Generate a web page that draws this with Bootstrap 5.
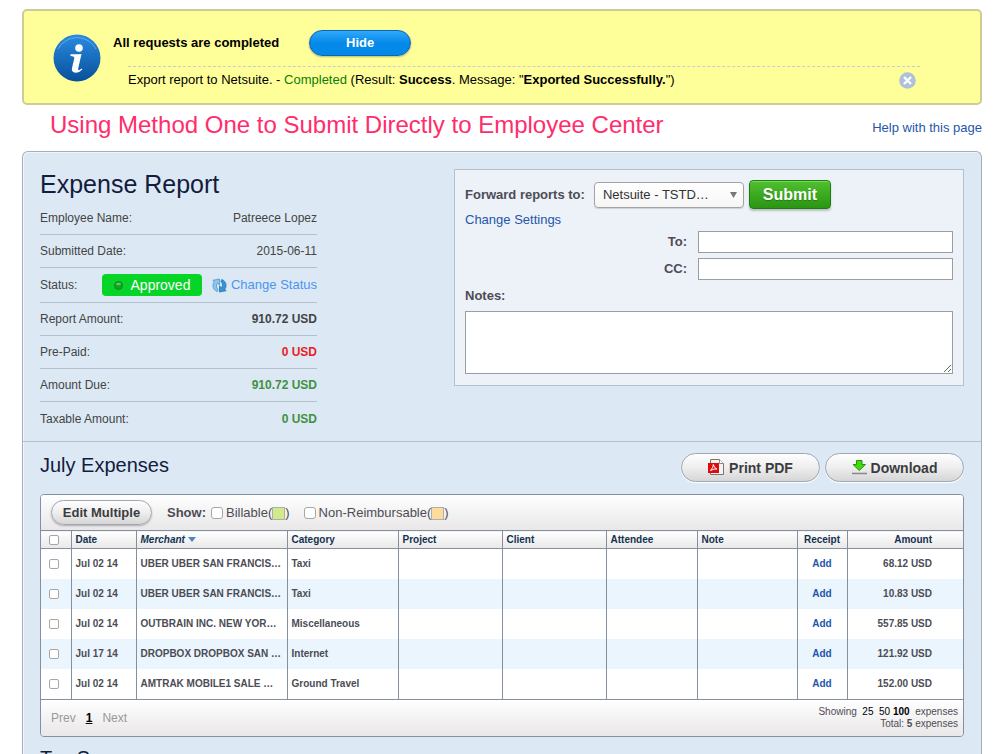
<!DOCTYPE html>
<html lang="en">
<head>
<meta charset="utf-8">
<meta name="viewport" content="width=device-width, initial-scale=1">
<title>Expense Report</title>
<link href="https://cdn.jsdelivr.net/npm/bootstrap@5.3.0/dist/css/bootstrap.min.css" rel="stylesheet">
<style>
body{font-family:"Liberation Sans",Arial,sans-serif;font-size:13px;line-height:18px;color:#444;background:#fff}
a{color:#1f56ab;text-decoration:none}
a:hover{text-decoration:underline}
.page{height:100vh;overflow:auto;scrollbar-width:none;padding:9px 18px 0 22px}
.page::-webkit-scrollbar{display:none}
.notice{background:#ff9;border:2px solid #cc9;border-radius:5px;color:#000;padding:19px 60px 14px 29px}
.notice-icon{margin-top:4px}
.btn-hide{width:102px;height:26px;margin-left:30px;padding:0;border:1px solid #0a66b8;border-radius:13px;background:linear-gradient(#31a8fb,#0489e8 50%,#0489e8);color:#fff;font-size:13px;line-height:18px;font-weight:bold;box-shadow:0 1px 2px #0004}
.btn-hide:hover{background:#0489e8;color:#fff}
.jobs{margin:10px 0 0 15px;border-top:1px dashed #cbcbd8;padding-top:4px}
.job-ok{color:#087d08}
.headline{font-size:24px;line-height:30px;color:#ff2d6c;font-weight:normal}
.headbar{height:46px;padding:5px 0 0 28px}
.help{padding-top:9px}
.panel{background:#dce9f4;border:1px solid #a6afb9;border-bottom:0;border-radius:6px 6px 0 0;box-shadow:inset 1px 1px #f0f6fb}
.sec{padding:17px}
.sec-top{border-bottom:1px solid #b3bfcc;padding-bottom:6px}
h1,h2{color:#131b3e;font-weight:normal;margin:0}
h1{font-size:25px;line-height:31px;margin-bottom:2px}
h2{font-size:20px;line-height:24px}
.facts{width:277px}
.facts dl{margin:0;font-size:12px}
.fact{min-height:33px;border-bottom:1px solid #b3bfcc}
.fact:last-child{border:0}
.facts dt{font-weight:normal}
.facts dd{margin:0}
.due{color:#42903f}
.paid{color:#eb1c24}
.status-row{min-height:35px}
.state{width:100px;height:22px;border-radius:4px;background:#06d427;color:#fff;font-size:14px}
.sync{margin:0 4px 0 10px}
.change{color:#4a95f2;font-size:13px}
.fwd{width:510px;height:217px;background:#edf1f8;border:1px solid #b4c0cc;padding:10px}
.fwd label{font-weight:bold;color:#4c4c55}
.pick{width:150px;height:26px;margin:0 5px 0 9px;border:1px solid #a3a3a3;border-radius:4px;padding:0 24px 0 8px;color:#333;appearance:none;background:url("data:image/svg+xml,%3Csvg xmlns='http://www.w3.org/2000/svg' width='8' height='6'%3E%3Cpath d='M0 0h7L3.5 6z' fill='%23777'/%3E%3C/svg%3E") no-repeat right 5px center,linear-gradient(#fff,#f6f6f6);box-shadow:0 1px 1px #0002}
.btn-send{width:82px;height:29px;padding:0;border:1px solid #1e7c12;border-radius:4px;background:linear-gradient(#4fc02f,#2a9512);color:#fff;font-weight:bold;font-size:16px;line-height:20px;box-shadow:0 2px 2px #0003,inset 0 1px #74d85a;text-shadow:0 1px 1px #0004}
.btn-send:hover{background:#2a9512;color:#fff}
.settings{display:inline-block;margin-top:2px}
.mail{height:22px;margin-top:5px}
.mail:first-of-type{margin-top:2px}
.mail label{margin-right:11px}
.noteslabel{margin:7px 0 6px}
.field,.notes{border:1px solid #989ea6;border-radius:0;background:#fff;padding:2px 4px}
.field{width:255px;height:22px}
.notes{display:block;width:100%;height:63px}
.exp{padding-top:11px}
.top-actions{gap:5px}
.pill{border:1px solid #a0a7b5;background:linear-gradient(#fefefe,#eee 50%,#d6d6d6);color:#3c3c40;font-weight:bold;padding:0;line-height:20px}
.pill:hover{background:#e6e6e6}
.pill-lg{width:139px;height:29px;border-radius:15px;font-size:14px;box-shadow:0 1px 1px #fff}
.pill-sm{width:101px;height:25px;border-radius:13px;font-size:13px;box-shadow:0 1px 2px #0004}
.gridbox{margin-top:12px;border:1px solid #848fa0;border-radius:4px;overflow:hidden;color:#4c4c55}
.toolbar{height:35px;padding:0 10px;background:linear-gradient(#fff,#e9e7e7)}
.show-l{margin:0 5px 0 15px}
.swatch{display:inline-block;width:13px;height:13px;border:1px solid #aab0b0;vertical-align:-3px}
.lime{background:#d3ea8c}
.peach{background:#fddb9c}
.tick{width:12px;height:12px;margin:0;border:1px solid #a6a6a6;border-radius:3px;background:#fff;appearance:none;flex:none}
.tick:checked{background:#1f6fd0}
.tick + label{margin-left:3px}
.nonr{margin-left:14px}
.tick-sm{display:block;width:10px;height:10px;border-radius:2px}
.grid{table-layout:fixed;width:100%;font-size:10px;line-height:12px;font-weight:bold;background:#fff}
.grid th{height:18px;padding:0 4px;background:linear-gradient(#fff,#e9e7e7);color:#12324f;border:1px solid #848fa0;border-width:1px 0 1px 1px}
.grid td{height:30px;padding:0 4px;border-left:1px solid #848fa0;white-space:nowrap;overflow:hidden}
.grid th:first-child,.grid td:first-child{border-left:0;padding:0 0 0 8px}
.grid tbody tr:nth-child(even){background:#ebf5fd}
.grid th:last-child,.grid td:last-child{text-align:right;padding-right:31px}
.grid th:nth-last-child(2),.grid td:nth-last-child(2){text-align:center}
.foot{height:37px;padding:0 5px 0 10px;border-top:1px solid #848fa0;background:linear-gradient(#fff,#e9e7e7)}
.pager{font-size:12px;gap:10px;color:#999}
.count{font-size:10px;line-height:12px;text-align:right}
.count a{color:#000}
.tax{margin-top:9px}
.c-tick{width:30px}.c-date{width:65px}.c-merch{width:151px}.c-cat{width:111px}.c-wide{width:104px}.c-att{width:91px}.c-note{width:100px}.c-rec{width:50px}.c-amt{width:116px}
</style>
</head>
<body>
<div class="page">
  <section class="notice d-flex">
    <svg class="notice-icon flex-shrink-0" width="48" height="48" viewBox="0 0 48 48" aria-hidden="true">
      <defs><linearGradient id="ib" x2="0" y2="1"><stop stop-color="#2a8be0"/><stop offset="1" stop-color="#07509a"/></linearGradient></defs>
      <circle cx="24" cy="24" r="23.500" fill="url(#ib)"/>
      <path d="M5 15A21.500 21.500 0 0 1 43 15" fill="none" stroke="#8cc4f4" opacity=".6"/>
      <circle cx="26" cy="14" r="3.800" fill="#fff"/>
      <path d="M17.500 20.300q6 .2 11-.3L25.300 34q-.5 2.300.7 2.200 1-.2 2.600-1.600l.8.900q-3.200 3.400-6.800 3.200-4.600-.3-3.600-4.700l2.300-9.700q.5-2.200-3.800-2.400z" fill="#fff"/>
    </svg>
    <div class="flex-grow-1 ps-2 ms-1">
      <div class="d-flex align-items-center">
        <strong>All requests are completed</strong>
        <button type="button" class="btn btn-hide">Hide</button>
      </div>
      <div class="jobs d-flex justify-content-between">
        <span>Export report to Netsuite. - <span class="job-ok">Completed</span> (Result: <b>Success</b>. Message: "<b>Exported Successfully.</b>")</span>
        <button type="button" class="btn p-0 border-0 d-flex me-1" aria-label="Dismiss">
          <svg width="17" height="18" viewBox="0 0 17 18"><circle cx="8.500" cy="9.500" r="8.300" fill="#afc1d9"/><path d="M5 6l7 7M12 6l-7 7" stroke="#fff" stroke-width="2.400"/></svg>
        </button>
      </div>
    </div>
  </section>

  <div class="headbar d-flex justify-content-between align-items-start">
    <div class="headline">Using Method One to Submit Directly to Employee Center</div>
    <a href="#" class="help">Help with this page</a>
  </div>

  <main class="panel">
    <section class="sec sec-top d-flex justify-content-between align-items-start">
      <div class="facts">
        <h1>Expense Report</h1>
        <dl>
          <div class="fact d-flex align-items-center justify-content-between"><dt>Employee Name:</dt><dd>Patreece Lopez</dd></div>
          <div class="fact d-flex align-items-center justify-content-between"><dt>Submitted Date:</dt><dd>2015-06-11</dd></div>
          <div class="fact status-row d-flex align-items-center justify-content-between"><dt>Status:</dt>
            <dd class="d-flex align-items-center">
              <span class="state d-flex align-items-center justify-content-center gap-2">
                <svg width="9" height="9" viewBox="0 0 9 9" aria-hidden="true"><circle cx="4.500" cy="4.500" r="4" fill="#12a421" stroke="#0d8a1c"/><ellipse cx="4.500" cy="3" rx="2.500" ry="1.200" fill="#5fc968"/></svg>Approved</span>
              <svg class="sync" width="15" height="15" viewBox="0 0 16 16" aria-hidden="true">
                <path d="M.8 2.500L8 1v6.500L5.800 5.600Q4.300 7.500 5 10l1.500 2.500-1 2Q1 12.500 1 8q0-2.500 1.500-4z" fill="#8cc6ee" stroke="#4a90c8" stroke-width=".8"/>
                <path d="M15.200 13.500L8 15V8.500l2.200 1.900Q11.700 8.500 11 6L9.500 3.500l1-2Q15 3.500 15 8q0 2.500-1.500 4z" fill="#3297d6" stroke="#2472ad" stroke-width=".8"/>
              </svg>
              <a href="#" class="change">Change Status</a>
            </dd></div>
          <div class="fact d-flex align-items-center justify-content-between"><dt>Report Amount:</dt><dd class="fw-bold">910.72 USD</dd></div>
          <div class="fact d-flex align-items-center justify-content-between"><dt>Pre-Paid:</dt><dd class="fw-bold paid">0 USD</dd></div>
          <div class="fact d-flex align-items-center justify-content-between"><dt>Amount Due:</dt><dd class="fw-bold due">910.72 USD</dd></div>
          <div class="fact d-flex align-items-center justify-content-between"><dt>Taxable Amount:</dt><dd class="fw-bold due">0 USD</dd></div>
        </dl>
      </div>
      <form class="fwd">
        <header class="d-flex align-items-center">
          <label for="dest">Forward reports to:</label>
          <select id="dest" class="pick"><option>Netsuite - TSTD…</option></select>
          <button type="button" class="btn btn-send">Submit</button>
        </header>
        <a href="#" class="settings">Change Settings</a>
        <div class="d-flex align-items-center justify-content-end mail"><label for="to">To:</label><input id="to" type="text" class="field"></div>
        <div class="d-flex align-items-center justify-content-end mail"><label for="cc">CC:</label><input id="cc" type="text" class="field"></div>
        <label for="notes" class="d-block noteslabel">Notes:</label>
        <textarea id="notes" class="notes"></textarea>
      </form>
    </section>

    <section class="sec exp">
      <div class="d-flex justify-content-between align-items-start">
        <h2>July Expenses</h2>
        <div class="d-flex top-actions">
          <button type="button" class="btn pill pill-lg d-flex align-items-center justify-content-center">
            <svg class="me-1" width="17" height="17" viewBox="0 0 17 17" aria-hidden="true"><path d="M2.500.5h9l4 4v11h-13z" fill="#f4f4f4" stroke="#777"/><path d="M11.500.5v4h4" fill="#fff" stroke="#888"/><path d="M0 4h11v10H0z" fill="#df0a0a"/><path d="M2.500 11.500Q5.500 8.500 5.300 5.500q.8 3.500 3.700 4.500-3-.5-6.500 1.500z" fill="none" stroke="#fff"/></svg>Print PDF</button>
          <button type="button" class="btn pill pill-lg d-flex align-items-center justify-content-center gap-1">
            <svg width="15" height="15" viewBox="0 0 15 15" aria-hidden="true"><path d="M4.500.5h5.500v4h3.500L7.300 10.500 1 4.500h3.500z" fill="#3fdc0c" stroke="#28900f"/><path d="M.5 10.500v2.500h14v-2.500" fill="none" stroke="#ddd"/><path d="M0 13.500h15" stroke="#888" stroke-width="1.500"/></svg>Download</button>
        </div>
      </div>
      <div class="gridbox">
        <div class="toolbar d-flex align-items-center">
          <button type="button" class="btn pill pill-sm">Edit Multiple</button>
          <b class="show-l">Show:</b>
          <input type="checkbox" class="tick" id="bill"><label for="bill">Billable(<span class="swatch lime"></span>)</label>
          <input type="checkbox" class="tick nonr" id="nonr"><label for="nonr">Non-Reimbursable(<span class="swatch peach"></span>)</label>
        </div>
        <table class="grid">
          <colgroup><col class="c-tick"><col class="c-date"><col class="c-merch"><col class="c-cat"><col class="c-wide"><col class="c-wide"><col class="c-att"><col class="c-note"><col class="c-rec"><col class="c-amt"></colgroup>
          <thead><tr><th><input type="checkbox" class="tick tick-sm" aria-label="Select all"></th><th>Date</th><th><i>Merchant</i> <svg width="8" height="5" viewBox="0 0 8 5" aria-hidden="true"><path d="M0 0h8L4 5z" fill="#4c86c6"/></svg></th><th>Category</th><th>Project</th><th>Client</th><th>Attendee</th><th>Note</th><th>Receipt</th><th>Amount</th></tr></thead>
          <tbody>
            <tr><td><input type="checkbox" class="tick tick-sm" aria-label="Select"></td><td>Jul 02 14</td><td>UBER UBER SAN FRANCIS…</td><td>Taxi</td><td></td><td></td><td></td><td></td><td><a href="#">Add</a></td><td>68.12 USD</td></tr>
            <tr><td><input type="checkbox" class="tick tick-sm" aria-label="Select"></td><td>Jul 02 14</td><td>UBER UBER SAN FRANCIS…</td><td>Taxi</td><td></td><td></td><td></td><td></td><td><a href="#">Add</a></td><td>10.83 USD</td></tr>
            <tr><td><input type="checkbox" class="tick tick-sm" aria-label="Select"></td><td>Jul 02 14</td><td>OUTBRAIN INC. NEW YOR…</td><td>Miscellaneous</td><td></td><td></td><td></td><td></td><td><a href="#">Add</a></td><td>557.85 USD</td></tr>
            <tr><td><input type="checkbox" class="tick tick-sm" aria-label="Select"></td><td>Jul 17 14</td><td>DROPBOX DROPBOX SAN …</td><td>Internet</td><td></td><td></td><td></td><td></td><td><a href="#">Add</a></td><td>121.92 USD</td></tr>
            <tr><td><input type="checkbox" class="tick tick-sm" aria-label="Select"></td><td>Jul 02 14</td><td>AMTRAK MOBILE1 SALE …</td><td>Ground Travel</td><td></td><td></td><td></td><td></td><td><a href="#">Add</a></td><td>152.00 USD</td></tr>
          </tbody>
        </table>
        <div class="foot d-flex align-items-center justify-content-between">
          <div class="pager d-flex"><span>Prev</span><b class="text-black text-decoration-underline">1</b><span>Next</span></div>
          <div class="count">Showing &nbsp;<a href="#">25</a>&nbsp; <a href="#">50</a> <b class="text-black">100</b> &nbsp;expenses<br>Total: <b>5</b> expenses</div>
        </div>
      </div>
      <h2 class="tax">Tax Summary</h2>
    </section>
  </main>
</div>
<script src="https://cdn.jsdelivr.net/npm/bootstrap@5.3.0/dist/js/bootstrap.bundle.min.js"></script>
</body>
</html>
